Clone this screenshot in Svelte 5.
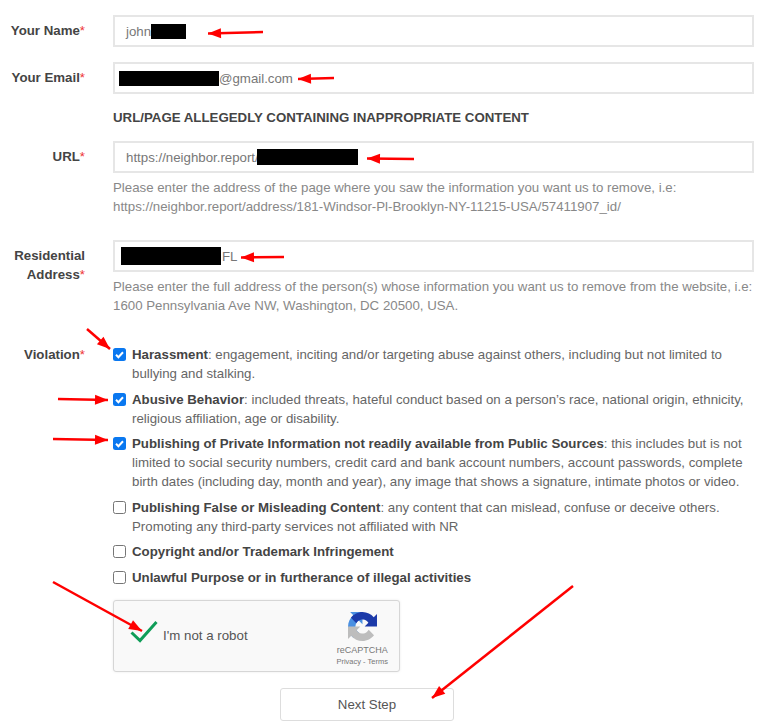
<script>
  const violations = [
    { title: 'Harassment', rest: ': engagement, inciting and/or targeting abuse against others, including but not limited to bullying and stalking.', checked: true },
    { title: 'Abusive Behavior', rest: ': included threats, hateful conduct based on a person’s race, national origin, ethnicity, religious affiliation, age or disability.', checked: true },
    { title: 'Publishing of Private Information not readily available from Public Sources', rest: ': this includes but is not limited to social security numbers, credit card and bank account numbers, account passwords, complete birth dates (including day, month and year), any image that shows a signature, intimate photos or video.', checked: true },
    { title: 'Publishing False or Misleading Content', rest: ': any content that can mislead, confuse or deceive others. Promoting any third-party services not affiliated with NR', checked: false },
    { title: 'Copyright and/or Trademark Infringement', rest: '', checked: false },
    { title: 'Unlawful Purpose or in furtherance of illegal activities', rest: '', checked: false }
  ];

  // hand-drawn red annotations: [x1, y1, x2, y2]
  const arrows = [
    [263, 32, 208, 33.500],
    [334, 78, 298, 79],
    [414, 159, 367, 158.500],
    [284, 257, 241, 257.500],
    [87, 329, 110, 349],
    [58, 399, 108, 400],
    [53, 439, 108, 440],
    [53, 582, 142, 631],
    [573, 586, 432, 698]
  ];

  function head(a) {
    const [x1, y1, x2, y2] = a;
    const len = Math.hypot(x2 - x1, y2 - y1);
    const ux = (x2 - x1) / len, uy = (y2 - y1) / len;
    const bx = x2 - ux * 13, by = y2 - uy * 13;
    return `${x2},${y2} ${bx - uy * 5},${by + ux * 5} ${bx + uy * 5},${by - ux * 5}`;
  }

  const arrowPath = 'M64 31.955l-.033-1.370V4.687l-7.160 7.160C50.948 4.674 42.033.093 32.050.093 21.660.093 12.430 5.053 6.595 12.733l11.736 11.860a15.550 15.550 0 0 1 4.754-5.334c2.050-1.600 4.952-2.906 8.968-2.906.485 0 .860.057 1.135.163 4.976.393 9.290 3.140 11.830 7.124l-8.307 8.307c10.522-.040 22.400-.066 27.290.005';
</script>

<div class="page">
  <div class="row">
    <div class="label">Your Name<span class="req">*</span></div>
    <div class="field"><div class="input">john<span class="redact" style="width:35px"></span></div></div>
  </div>

  <div class="row">
    <div class="label">Your Email<span class="req">*</span></div>
    <div class="field"><div class="input tight"><span class="redact" style="width:100px"></span>@gmail.com</div></div>
  </div>

  <div class="row">
    <div></div>
    <h3>URL/PAGE ALLEGEDLY CONTAINING INAPPROPRIATE CONTENT</h3>
  </div>

  <div class="row">
    <div class="label">URL<span class="req">*</span></div>
    <div class="field">
      <div class="input">https://neighbor.report/<span class="redact url" style="width:101px"></span></div>
      <p class="help">Please enter the address of the page where you saw the information you want us to remove, i.e:<br />https://neighbor.report/address/181-Windsor-Pl-Brooklyn-NY-11215-USA/57411907_id/</p>
    </div>
  </div>

  <div class="row address">
    <div class="label">Residential Address<span class="req">*</span></div>
    <div class="field">
      <div class="input tight"><span class="redact tall" style="width:100px"></span>FL</div>
      <p class="help">Please enter the full address of the person(s) whose information you want us to remove from the website, i.e:<br />1600 Pennsylvania Ave NW, Washington, DC 20500, USA.</p>
    </div>
  </div>

  <div class="row violations">
    <div class="label">Violation<span class="req">*</span></div>
    <div class="checks">
      {#each violations as v}
        <div class="check">
          <span class="box" class:on={v.checked}>
            {#if v.checked}
              <svg viewBox="0 0 13 13" width="13" height="13"><path d="M3 6.800l2.400 2.400L10 4.200" fill="none" stroke="#fff" stroke-width="2"/></svg>
            {/if}
          </span>
          <div class="check-text"><b>{v.title}</b>{v.rest}</div>
        </div>
      {/each}
    </div>
  </div>

  <div class="captcha">
    <svg class="tick" viewBox="0 0 28 22" width="28" height="22"><path d="M1.500 11.500l8.500 8L26.500 1" fill="none" stroke="#0f9d58" stroke-width="3"/></svg>
    <span class="robot">I'm not a robot</span>
    <div class="badge">
      <svg viewBox="0 0 64 64" width="29" height="29">
        <path transform="rotate(-90 32 32)" d={arrowPath} fill="#4a90e2"/>
        <path d={arrowPath} fill="#1c3aa9"/>
        <path transform="rotate(180 32 32)" d={arrowPath} fill="#bdbdbd"/>
      </svg>
      <div class="brand">reCAPTCHA</div>
      <div class="terms">Privacy - Terms</div>
    </div>
  </div>

  <div class="actions"><button type="button">Next Step</button></div>

  <svg class="marks" width="764" height="728" viewBox="0 0 764 728">
    {#each arrows as a}
      <line x1={a[0]} y1={a[1]} x2={a[2]} y2={a[3]} stroke="#f00" stroke-width="2.500" />
      <polygon points={head(a)} fill="#f00" />
    {/each}
  </svg>
</div>

<style>
  :global(body) {
    margin: 0;
    background: #fff;
    font-family: "Liberation Sans", Arial, sans-serif;
    font-size: 13.28px;
    line-height: 19px;
    color: #666;
  }

  .page {
    position: relative;
    width: 764px;
    height: 728px;
    overflow: hidden;
    box-sizing: border-box;
    padding: 15px 10px 0 0;
  }

  .row {
    display: grid;
    grid-template-columns: 85px 1fr;
    column-gap: 28px;
    margin-bottom: 15px;
  }

  .label {
    text-align: right;
    font-weight: 700;
    color: #444;
    padding-top: 6px;
  }
  .req { color: #e33; font-weight: 400; }

  .input {
    display: flex;
    align-items: center;
    box-sizing: border-box;
    height: 32px;
    padding: 0 11px;
    border: 2px solid #e6e6e6;
    color: #777;
  }
  .input.tight { padding-left: 4px; }
  .input.tight .tall { margin: 0 1px 0 2px; height: 18px; }

  .redact {
    display: inline-block;
    height: 15px;
    background: #000;
  }
  .redact.url { height: 16px; margin-left: -2px; }

  h3 {
    margin: 0;
    font-size: 13.28px;
    line-height: 17px;
    font-weight: 700;
    color: #444;
  }

  .help {
    margin: 5px 0 0;
    color: #888;
    white-space: nowrap;
  }

  .address { margin-top: 24px; }

  .violations { margin-top: 30px; margin-bottom: 0; }
  .violations .label { padding-top: 0; }

  .check {
    display: flex;
    gap: 6px;
    margin-bottom: 6.600px;
  }
  .check-text { flex: 1; }
  .check-text b { color: #444; }

  .box {
    flex: none;
    box-sizing: border-box;
    width: 13px;
    height: 13px;
    margin-top: 3px;
    border: 1px solid #767676;
    border-radius: 2.500px;
    background: #fff;
  }
  .box.on { background: #0a78f0; border: none; }
  .box svg { display: block; }

  .captcha {
    display: flex;
    align-items: center;
    box-sizing: border-box;
    width: 287px;
    height: 72px;
    margin: 6px 0 0 113px;
    padding: 0 11px 0 16px;
    background: #f9f9f9;
    border: 1px solid #d6d6d6;
    border-radius: 3px;
    box-shadow: 0 0 3px rgba(0, 0, 0, 0.08);
  }
  .tick { flex: none; margin-right: 5px; margin-top: -8px; }
  .robot { color: #555; font-size: 13.300px; flex: 1; }

  .badge {
    display: flex;
    flex-direction: column;
    align-items: center;
    color: #777;
    padding-top: 8px;
  }
  .brand { font-size: 9px; line-height: 12px; margin-top: 3px; }
  .terms { font-size: 7.500px; line-height: 12px; }

  .actions { margin: 16px 0 0 280px; }
  button {
    width: 174px;
    height: 33px;
    padding: 0;
    background: #fff;
    border: 1px solid #ddd;
    border-radius: 3px;
    font: inherit;
    color: #555;
  }

  .marks {
    position: absolute;
    left: 0;
    top: 0;
    pointer-events: none;
  }
</style>
